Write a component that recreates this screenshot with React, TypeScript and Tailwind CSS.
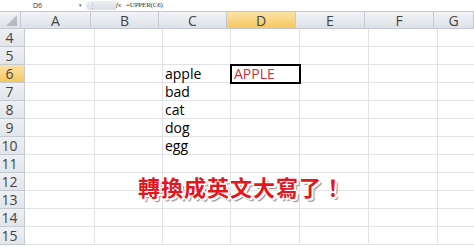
import React from 'react';

const cols = ['A', 'B', 'C', 'D', 'E', 'F', 'G'];
const widths = ['w-[70px]', 'w-[68px]', 'w-[68px]', 'w-[69px]', 'w-[69px]', 'w-[69px]', 'w-[40px]'];
const rows = [4, 5, 6, 7, 8, 9, 10, 11, 12, 13, 14, 15];

const cData: Record<number, string> = { 6: 'apple', 7: 'bad', 8: 'cat', 9: 'dog', 10: 'egg' };

const App: React.FC = () => {
  return (
    <div className="relative w-[474px] h-[247px] overflow-hidden bg-white font-['Open_Sans','Liberation_Sans',sans-serif]">
      {/* formula bar */}
      <div className="h-[11px] flex items-center text-[7px] leading-none text-[#333] bg-white">
        <span className="ml-[33px] w-[46px]">D6</span>
        <span className="text-[5px] text-[#555]">▾</span>
        <div className="ml-[4px] h-[9px] w-[30px] rounded-l-full bg-gradient-to-b from-[#eef1f5] to-[#d9dee5] flex items-center">
          <span className="ml-[3px] text-[#999]">⋮</span>
        </div>
        <span className="italic font-['Liberation_Serif',serif] text-[#444]">fx</span>
        <span className="ml-[5px] font-['Liberation_Serif',serif] tracking-[-0.2px]">=UPPER(C6)</span>
      </div>

      {/* column header */}
      <div className="flex h-[18px] bg-gradient-to-b from-[#f1f3f6] to-[#dde1e7] border-y border-[#c5cad2]">
        <div className="w-[25px] border-r border-[#c5cad2] relative">
          <div className="absolute right-[3px] bottom-[2px] w-0 h-0 border-l-[11px] border-l-transparent border-b-[11px] border-b-[#b7bcc4]" />
        </div>
        {cols.map((c, i) => (
          <div
            key={c}
            className={`${widths[i]} shrink-0 flex items-center justify-center text-[14px] text-[#444] border-r border-[#c5cad2] ${c === 'D' ? 'bg-gradient-to-b from-[#fbe3a6] to-[#f6c85a]' : ''}`}
          >
            {c}
          </div>
        ))}
      </div>

      {/* rows */}
      {rows.map((r) => (
        <div key={r} className="flex h-[18px]">
          <div
            className={`w-[25px] shrink-0 flex items-center justify-center pr-[5px] text-[14px] leading-none text-[#444] border-r border-b border-[#c5cad2] ${r === 6 ? 'bg-gradient-to-b from-[#fbe3a6] to-[#f6c85a]' : 'bg-gradient-to-b from-[#eef0f4] to-[#e2e5ea]'}`}
          >
            {r}
          </div>
          {cols.map((c, i) => (
            <div
              key={c}
              className={`${widths[i]} shrink-0 border-r border-b border-[#e0e2e3] flex items-center pl-[2px] text-[14px] leading-none text-black ${c === 'D' && r === 6 ? 'outline-2 outline-black -outline-offset-1 relative' : ''}`}
            >
              {c === 'C' && cData[r]}
              {c === 'D' && r === 6 && <span className="text-[#c8333c] pl-[1px]">APPLE</span>}
            </div>
          ))}
        </div>
      ))}

      {/* overlay caption */}
      <div className="absolute left-[138px] top-[175px] text-[22px] leading-none font-bold tracking-[1px] text-[#e4161d] font-['Noto_Sans_CJK_TC',sans-serif] [text-shadow:-1px_-1px_0_#fff,1px_-1px_0_#fff,-1px_1px_0_#fff,1px_1px_0_#fff,2px_2px_0_#fff,3px_3px_1px_#8a8a8a]">
        轉換成英文大寫了！
      </div>
    </div>
  );
};

export default App;
